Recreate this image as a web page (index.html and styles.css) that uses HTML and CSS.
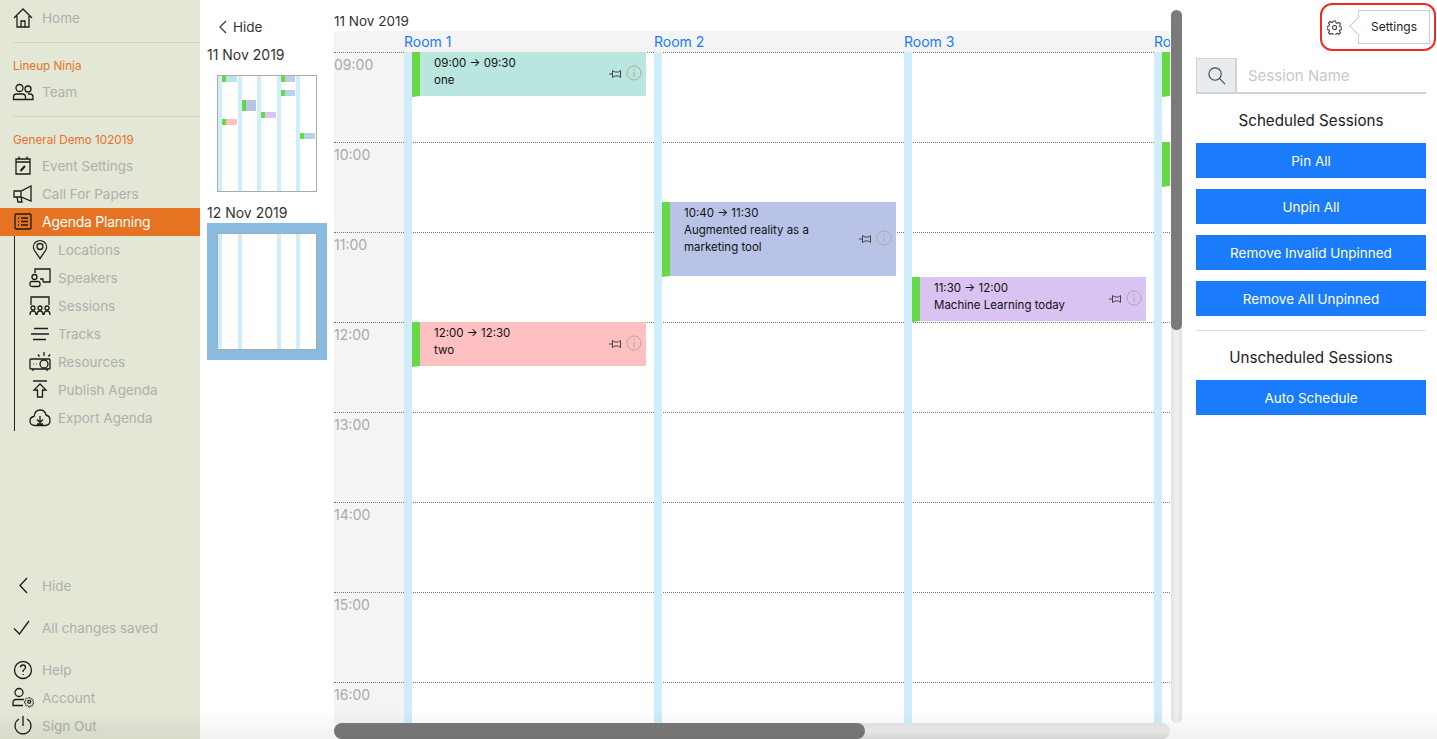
FILE: index.html
```html
<!DOCTYPE html>
<html lang="en">

<head>
    <meta charset="UTF-8">
    <meta name="viewport" content="width=device-width, initial-scale=1.0">
    <title>Agenda Planning</title>
    <link rel="stylesheet" href="styles.css">
</head>

<body>
<nav class="sidebar">
    <div class="nav-item">
        <svg class="icon" viewBox="0 0 22 22"><path d="M2 11 11 2l9 9M5 9v11h12V9M9 20v-6h4v6"/></svg>Home
    </div>
    <div class="nav-rule"></div>
    <div class="nav-group">Lineup Ninja</div>
    <div class="nav-item">
        <svg class="icon" viewBox="0 0 22 22"><circle cx="7.500" cy="7" r="3.500"/><circle cx="16" cy="8" r="3"/><path d="M1.500 18.500v-2.500q0-3 3-3h6q3 0 3 3v2.500zM16 13h2q3 0 3 3v2.500h-7"/></svg>Team
    </div>
    <div class="nav-rule"></div>
    <div class="nav-group">General Demo 102019</div>
    <div class="nav-item">
        <svg class="icon" viewBox="0 0 22 22"><path d="M4 4h14v15H4zM4 7h14M7 1.500V4M15 1.500V4"/><path class="icon-bold" d="m8.500 16 4.500-5"/></svg>Event Settings
    </div>
    <div class="nav-item">
        <svg class="icon" viewBox="0 0 22 22"><path d="M2 8h7l10-5v15L9 14H2zM9 8v6M5 14l1 5h4l-1-5"/></svg>Call For Papers
    </div>
    <div class="nav-item nav-active">
        <svg class="icon" viewBox="0 0 22 22"><rect x="3" y="3" width="16" height="15" rx="1"/><path d="M9 7h7M9 10.500h7M9 14h7M6 7h1M6 10.500h1M6 14h1"/></svg>Agenda Planning
    </div>
    <div class="nav-sub">
        <div class="nav-item">
            <svg class="icon" viewBox="0 0 22 22"><path d="M11 19.500 5.500 11.500a6.500 6.500 0 1 1 11 0z"/><circle cx="11" cy="7.500" r="3"/></svg>Locations
        </div>
        <div class="nav-item">
            <svg class="icon" viewBox="0 0 22 22"><path d="M6 6V2h15v13h-7M14 15v-3h-3"/><circle cx="5.500" cy="10" r="2.500"/><rect x="1" y="14.500" width="10" height="5" rx="2"/></svg>Speakers
        </div>
        <div class="nav-item">
            <svg class="icon" viewBox="0 0 22 22"><path d="M2 10V2h18v8"/><circle cx="4" cy="13" r="2"/><circle cx="11" cy="13" r="2"/><circle cx="18" cy="13" r="2"/><path d="M1 20q0-4 3-4t3 4M8 20q0-4 3-4t3 4M15 20q0-4 3-4t3 4"/></svg>Sessions
        </div>
        <div class="nav-item">
            <svg class="icon" viewBox="0 0 22 22"><path d="M5 5.500h14M2 11h18M4 16.500h13"/></svg>Tracks
        </div>
        <div class="nav-item">
            <svg class="icon" viewBox="0 0 22 22"><rect x="1" y="8" width="20" height="10" rx="1"/><circle cx="15" cy="13" r="4"/><path d="M15 5V1M10.500 5.500 9 3.500M19.500 5.500 21 3.500M4 13h.5M7 13h.5M4 18v2M18 18v2"/></svg>Resources
        </div>
        <div class="nav-item">
            <svg class="icon" viewBox="0 0 22 22"><path d="M4 2h14M11 5l-6 6h3.500v7h5v-7H17z"/></svg>Publish Agenda
        </div>
        <div class="nav-item">
            <svg class="icon" viewBox="0 0 22 22"><path d="M6 18.500q-5 0-5-4.500 0-4 4-4.500Q6 3 11 3t6 5q4 1 4 5.500 0 5-5 5zM11 9v6M8 12.500l3 3 3-3M8 17h6"/></svg>Export Agenda
        </div>
    </div>
    <div class="nav-bottom">
        <div class="nav-item">
            <svg class="icon" viewBox="0 0 22 22"><path d="M15 3 8 10.500l7 7.500"/></svg>Hide
        </div>
        <div class="nav-item nav-saved">
            <svg class="icon" viewBox="0 0 22 22"><path d="M2 11.500 7.500 17 17 4"/></svg>All changes saved
        </div>
        <div class="nav-item">
            <svg class="icon" viewBox="0 0 22 22"><circle cx="11" cy="11" r="8.500"/><path d="M8.500 8.500q0-2.500 2.500-2.500t2.500 2.500q0 1.500-2.500 3v1.500M11 15v1"/></svg>Help
        </div>
        <div class="nav-item">
            <svg class="icon" viewBox="0 0 22 22"><circle cx="7" cy="5.500" r="4"/><path d="M12 12.500H4q-3 0-3 3v3h10"/><path transform="translate(12.500 10) scale(.6)" d="M6.800 1h2.400l.4 2 1.300.6 1.800-1.100 1.700 1.700-1.100 1.800.6 1.300 2 .4v2.400l-2 .4-.6 1.300 1.100 1.800-1.700 1.700-1.800-1.100-1.300.6-.4 2H6.800l-.4-2-1.300-.6-1.800 1.100-1.700-1.700 1.100-1.800-.6-1.300-2-.4V6.800l2-.4.6-1.300-1.100-1.800 1.700-1.700 1.800 1.100 1.300-.6z"/><circle cx="17.300" cy="14.800" r="1.500"/></svg>Account
        </div>
        <div class="nav-item">
            <svg class="icon" viewBox="0 0 22 22"><path d="M7 4a8 8 0 1 0 8 0M11 1v10"/></svg>Sign Out
        </div>
    </div>
</nav>

<aside class="days">
    <div class="days-hide">
        <svg class="chevron" viewBox="0 0 10 14"><path d="M8 1 2 7l6 6"/></svg>Hide
    </div>
    <div class="day-title">11 Nov 2019</div>
    <div class="day-frame">
        <svg class="thumb" viewBox="0 0 98 115">
            <g class="thumb-strips">
                <rect x="0" width="4" height="115"/><rect x="20" width="4" height="115"/><rect x="39" width="4" height="115"/><rect x="59" width="4" height="115"/><rect x="78" width="4" height="115"/>
            </g>
            <rect x="4" width="15" height="6" fill="#b9e6df"/><rect x="4" width="4" height="6" fill="#66d944"/>
            <rect x="4" y="43" width="15" height="6" fill="#ffc0c2"/><rect x="4" y="43" width="4" height="6" fill="#66d944"/>
            <rect x="24" y="24" width="14" height="11" fill="#b9c3e8"/><rect x="24" y="24" width="4" height="11" fill="#66d944"/>
            <rect x="43" y="36" width="15" height="6" fill="#d8c3f2"/><rect x="43" y="36" width="4" height="6" fill="#66d944"/>
            <rect x="63" width="14" height="6" fill="#b8d0e8"/><rect x="63" width="4" height="6" fill="#66d944"/>
            <rect x="63" y="14" width="14" height="6" fill="#b8d0e8"/><rect x="63" y="14" width="4" height="6" fill="#66d944"/>
            <rect x="82" y="57" width="15" height="6" fill="#b8d0e8"/><rect x="82" y="57" width="4" height="6" fill="#66d944"/>
        </svg>
    </div>
    <div class="day-title day-title-second">12 Nov 2019</div>
    <div class="day-frame day-selected">
        <svg class="thumb" viewBox="0 0 98 115">
            <g class="thumb-strips">
                <rect x="0" width="4" height="115"/><rect x="20" width="4" height="115"/><rect x="59" width="4" height="115"/><rect x="78" width="4" height="115"/>
            </g>
        </svg>
    </div>
</aside>

<main class="calendar">
    <div class="cal-date">11 Nov 2019</div>
    <div class="cal-head">
        <div class="room-name">Room 1</div>
        <div class="room-name">Room 2</div>
        <div class="room-name">Room 3</div>
        <div class="room-name">Room 4</div>
    </div>
    <div class="cal-body">
        <div class="hour">09:00</div>
        <div class="hour">10:00</div>
        <div class="hour">11:00</div>
        <div class="hour">12:00</div>
        <div class="hour">13:00</div>
        <div class="hour">14:00</div>
        <div class="hour">15:00</div>
        <div class="hour">16:00</div>
        <div class="rooms">
            <div class="room">
                <div class="session teal" style="top:0;height:45px">
                    <div class="session-text">09:00 → 09:30<br>one</div>
                    <svg class="pin" viewBox="0 0 14 14"><path d="M1 7h3.500M4.500 3.500 7 5h3.500l2-1.500v7l-2-1.500H7l-2.500 1.500z"/></svg>
                    <svg class="info" viewBox="0 0 16 16"><circle cx="8" cy="8" r="7"/><path d="M8 7v5M8 4v1.500"/></svg>
                </div>
                <div class="session pink" style="top:270px;height:45px">
                    <div class="session-text">12:00 → 12:30<br>two</div>
                    <svg class="pin" viewBox="0 0 14 14"><path d="M1 7h3.500M4.500 3.500 7 5h3.500l2-1.500v7l-2-1.500H7l-2.500 1.500z"/></svg>
                    <svg class="info" viewBox="0 0 16 16"><circle cx="8" cy="8" r="7"/><path d="M8 7v5M8 4v1.500"/></svg>
                </div>
            </div>
            <div class="room">
                <div class="session blue" style="top:150px;height:75px">
                    <div class="session-text">10:40 → 11:30<br>Augmented reality as a marketing tool</div>
                    <svg class="pin" viewBox="0 0 14 14"><path d="M1 7h3.500M4.500 3.500 7 5h3.500l2-1.500v7l-2-1.500H7l-2.500 1.500z"/></svg>
                    <svg class="info" viewBox="0 0 16 16"><circle cx="8" cy="8" r="7"/><path d="M8 7v5M8 4v1.500"/></svg>
                </div>
            </div>
            <div class="room">
                <div class="session purple" style="top:225px;height:45px">
                    <div class="session-text">11:30 → 12:00<br>Machine Learning today</div>
                    <svg class="pin" viewBox="0 0 14 14"><path d="M1 7h3.500M4.500 3.500 7 5h3.500l2-1.500v7l-2-1.500H7l-2.500 1.500z"/></svg>
                    <svg class="info" viewBox="0 0 16 16"><circle cx="8" cy="8" r="7"/><path d="M8 7v5M8 4v1.500"/></svg>
                </div>
            </div>
            <div class="room">
                <div class="session sky" style="top:0;height:45px"></div>
                <div class="session sky" style="top:90px;height:45px"></div>
            </div>
        </div>
    </div>
    <div class="hscroll"><div class="hscroll-thumb"></div></div>
</main>

<div class="vscroll"><div class="vscroll-thumb"></div></div>

<aside class="panel">
    <div class="panel-top">
        <svg class="gear" viewBox="0 0 16 16"><circle cx="8" cy="8" r="2.200"/><path d="M6.800 1h2.400l.4 2 1.300.6 1.800-1.100 1.700 1.700-1.100 1.800.6 1.300 2 .4v2.400l-2 .4-.6 1.300 1.100 1.800-1.700 1.700-1.800-1.100-1.300.6-.4 2H6.800l-.4-2-1.300-.6-1.800 1.100-1.700-1.700 1.100-1.800-.6-1.300-2-.4V6.800l2-.4.6-1.300-1.100-1.800 1.700-1.700 1.800 1.100 1.300-.6z"/></svg>
        <div class="tip">Settings</div>
    </div>
    <div class="search">
        <div class="search-btn">
            <svg viewBox="0 0 20 20"><circle cx="8.500" cy="8.500" r="6.500"/><path d="m13 13 6 6"/></svg>
        </div>
        <div class="search-input">Session Name</div>
    </div>
    <h4 class="panel-title">Scheduled Sessions</h4>
    <div class="btn">Pin All</div>
    <div class="btn">Unpin All</div>
    <div class="btn">Remove Invalid Unpinned</div>
    <div class="btn">Remove All Unpinned</div>
    <div class="panel-rule"></div>
    <h4 class="panel-title panel-title-second">Unscheduled Sessions</h4>
    <div class="btn">Auto Schedule</div>
    <div class="callout"></div>
</aside>

<div class="page-fade"></div>
</body>

</html>
```

FILE: styles.css
```css
* {
    margin: 0;
    padding: 0;
    box-sizing: border-box;
}

html,
body {
    height: 739px;
    overflow: hidden;
}

body {
    display: flex;
    font-family: Inter, "Liberation Sans", sans-serif;
    color: #222;
    background: #fff;
}

/* left nav */
.sidebar {
    flex: none;
    width: 200px;
    height: 739px;
    background: #e2e7d6;
    padding-top: 4px;
}

.nav-item {
    display: flex;
    align-items: center;
    gap: 8px;
    height: 28px;
    padding-left: 12px;
    padding-bottom: 1px;
    font-size: 13.500px;
    color: #aeb0ac;
}

.icon {
    flex: none;
    width: 22px;
    height: 22px;
    fill: none;
    stroke: #1c1c1c;
    stroke-width: 1.300;
}

.icon-bold {
    stroke-width: 2;
}

.nav-rule {
    height: 1px;
    margin: 10px 0 0 13px;
    background: #cfd3c5;
}

.nav-group {
    height: 18px;
    margin-top: 14px;
    padding-left: 13px;
    font-size: 11.700px;
    line-height: 18px;
    color: #e8722a;
}

.nav-group + .nav-item {
    margin-top: 3px;
}

.nav-active {
    font-size: 14px;
    letter-spacing: -.25px;
    color: #fff;
    background: #e67322;
}

.nav-sub {
    margin-left: 14px;
    height: 195px;
    border-left: 1px solid #222;
}

.nav-sub .nav-item {
    padding-left: 14px;
    gap: 7px;
}

.nav-bottom {
    margin-top: 141px;
}

.nav-saved {
    margin: 14px 0;
}

/* day thumbnails */
.days {
    flex: none;
    width: 134px;
    padding: 15px 7px 0;
}

.days-hide {
    display: flex;
    align-items: center;
    gap: 5px;
    height: 24px;
    padding-left: 11px;
    padding-bottom: 1px;
    font-size: 13.500px;
    color: #333;
}

.chevron {
    width: 10px;
    height: 14px;
    fill: none;
    stroke: #333;
    stroke-width: 1.200;
}

.day-title {
    margin-top: 6px;
    height: 20px;
    font-size: 14px;
    line-height: 20px;
    color: #333;
}

.day-title-second {
    margin-top: 1px;
}

.day-frame {
    width: 120px;
    height: 137px;
    padding: 10px;
}

.day-selected {
    background: #88bbdf;
}

.thumb {
    display: block;
    width: 100px;
    height: 117px;
    background: #fff;
    border: 1px solid #aaa;
}

.thumb-strips {
    fill: #d0edfb;
}

/* calendar */
.calendar {
    flex: none;
    width: 836px;
    height: 739px;
    display: flex;
    flex-direction: column;
    overflow: hidden;
}

.cal-date {
    flex: none;
    height: 31px;
    padding-top: 12px;
    font-size: 13.500px;
    line-height: 18px;
    color: #333;
}

.cal-head {
    flex: none;
    display: flex;
    height: 21px;
    padding-left: 70px;
    background: #f4f4f4;
}

.room-name {
    flex: none;
    width: 250px;
    font-size: 14px;
    line-height: 22px;
    color: #1a7cfb;
}

.cal-body {
    position: relative;
    flex: 1;
    min-height: 0;
    overflow: hidden;
    background: linear-gradient(to right, #f4f4f4 70px, #fff 70px);
}

.hour {
    height: 90px;
    padding-top: 3px;
    border-top: 1px dotted #777;
    font-size: 14px;
    line-height: 18px;
    color: #aaa;
}

.rooms {
    position: absolute;
    top: 0;
    left: 70px;
    bottom: 0;
    display: flex;
}

.room {
    position: relative;
    flex: none;
    width: 250px;
    background: linear-gradient(to right, #d0edfb 8px, transparent 8px);
}

.session {
    position: absolute;
    left: 8px;
    width: 234px;
    display: flex;
    align-items: center;
    padding: 0 4px 0 14px;
    border-left: 8px solid #66d944;
    border-bottom: 1px solid transparent;
    background-clip: padding-box;
    font-size: 11.500px;
    line-height: 17px;
    color: #111;
}

.session-text {
    flex: 1;
    min-width: 0;
    align-self: flex-start;
    padding: 3px 20px 0 0;
}

.teal {
    background-color: #b9e6df;
}

.pink {
    background-color: #ffc0c2;
}

.blue {
    background-color: #b9c3e8;
}

.purple {
    background-color: #d8c3f2;
}

.sky {
    background-color: #b8d0e8;
}

.pin {
    flex: none;
    width: 14px;
    height: 14px;
    fill: none;
    stroke: #444;
    stroke-width: 1;
}

.info {
    flex: none;
    width: 16px;
    height: 16px;
    margin: -2px 0 0 4px;
    fill: none;
    stroke: #aaa;
    stroke-width: 1;
}

/* scrollbars */
.hscroll {
    flex: none;
    height: 16px;
    border-radius: 8px;
    background: linear-gradient(#e6e6e6, #f0f0f0 50%, #e0e0e0);
}

.hscroll-thumb {
    width: 531px;
    height: 16px;
    border-radius: 8px;
    background: #7a7a7a;
}

.vscroll {
    flex: none;
    width: 11px;
    height: 713px;
    margin: 10px 0 0 1px;
    border-radius: 6px;
    background: linear-gradient(to right, #e2e2e2, #f0f0f0 50%, #e0e0e0);
}

.vscroll-thumb {
    height: 320px;
    border-radius: 6px;
    background: #7a7a7a;
}

/* right panel */
.panel {
    position: relative;
    flex: none;
    width: 255px;
    padding: 0 11px 0 14px;
}

.panel-top {
    display: flex;
    align-items: center;
    justify-content: flex-end;
    height: 58px;
    padding: 0 0 4px;
    margin-right: -4px;
}

.gear {
    width: 15px;
    height: 15px;
    margin-right: 16px;
    fill: none;
    stroke: #444;
    stroke-width: 1.200;
}

.tip {
    position: relative;
    width: 72px;
    height: 34px;
    border: 1px solid #ccc;
    font-size: 12px;
    line-height: 32px;
    text-align: center;
    color: #222;
}

.tip::before {
    content: "";
    position: absolute;
    top: 8px;
    left: -7px;
    width: 13px;
    height: 13px;
    background: #fff;
    border-left: 1px solid #ccc;
    border-bottom: 1px solid #ccc;
    transform: rotate(45deg);
}

.search {
    display: flex;
    height: 36px;
    border-bottom: 2px solid #ced4da;
}

.search-btn {
    width: 41px;
    padding: 7px 10px;
    background: #e9ecef;
    border: 1px solid #ced4da;
    border-bottom: 0;
    border-right-width: 2px;
}

.search-btn svg {
    display: block;
    width: 19px;
    height: 19px;
    fill: none;
    stroke: #444;
    stroke-width: 1.200;
}

.search-input {
    padding-left: 11px;
    font-size: 15px;
    line-height: 36px;
    color: #c5c8cc;
}

.panel-title {
    margin: 16px 0 11px;
    font-size: 15.200px;
    font-weight: 400;
    line-height: 22px;
    text-align: center;
    color: #222;
}

.panel-title-second {
    margin: 16px 0 11px;
}

.btn {
    height: 35px;
    margin-bottom: 11px;
    font-size: 13.500px;
    line-height: 37px;
    text-align: center;
    color: #fff;
    background: #1a7cfb;
}

.panel-rule {
    height: 1px;
    margin-top: 14px;
    background: #ddd;
}

/* red annotation round the settings button */
.callout {
    position: absolute;
    top: 3px;
    left: 138px;
    width: 116px;
    height: 48px;
    border: 2px solid #ee2c22;
    border-radius: 12px;
}

/* the screenshot fades to grey along its bottom edge */
.page-fade {
    position: fixed;
    left: 0;
    right: 0;
    bottom: 0;
    height: 30px;
    pointer-events: none;
    background: linear-gradient(rgba(0, 0, 0, 0), rgba(0, 0, 0, .05));
}
```
